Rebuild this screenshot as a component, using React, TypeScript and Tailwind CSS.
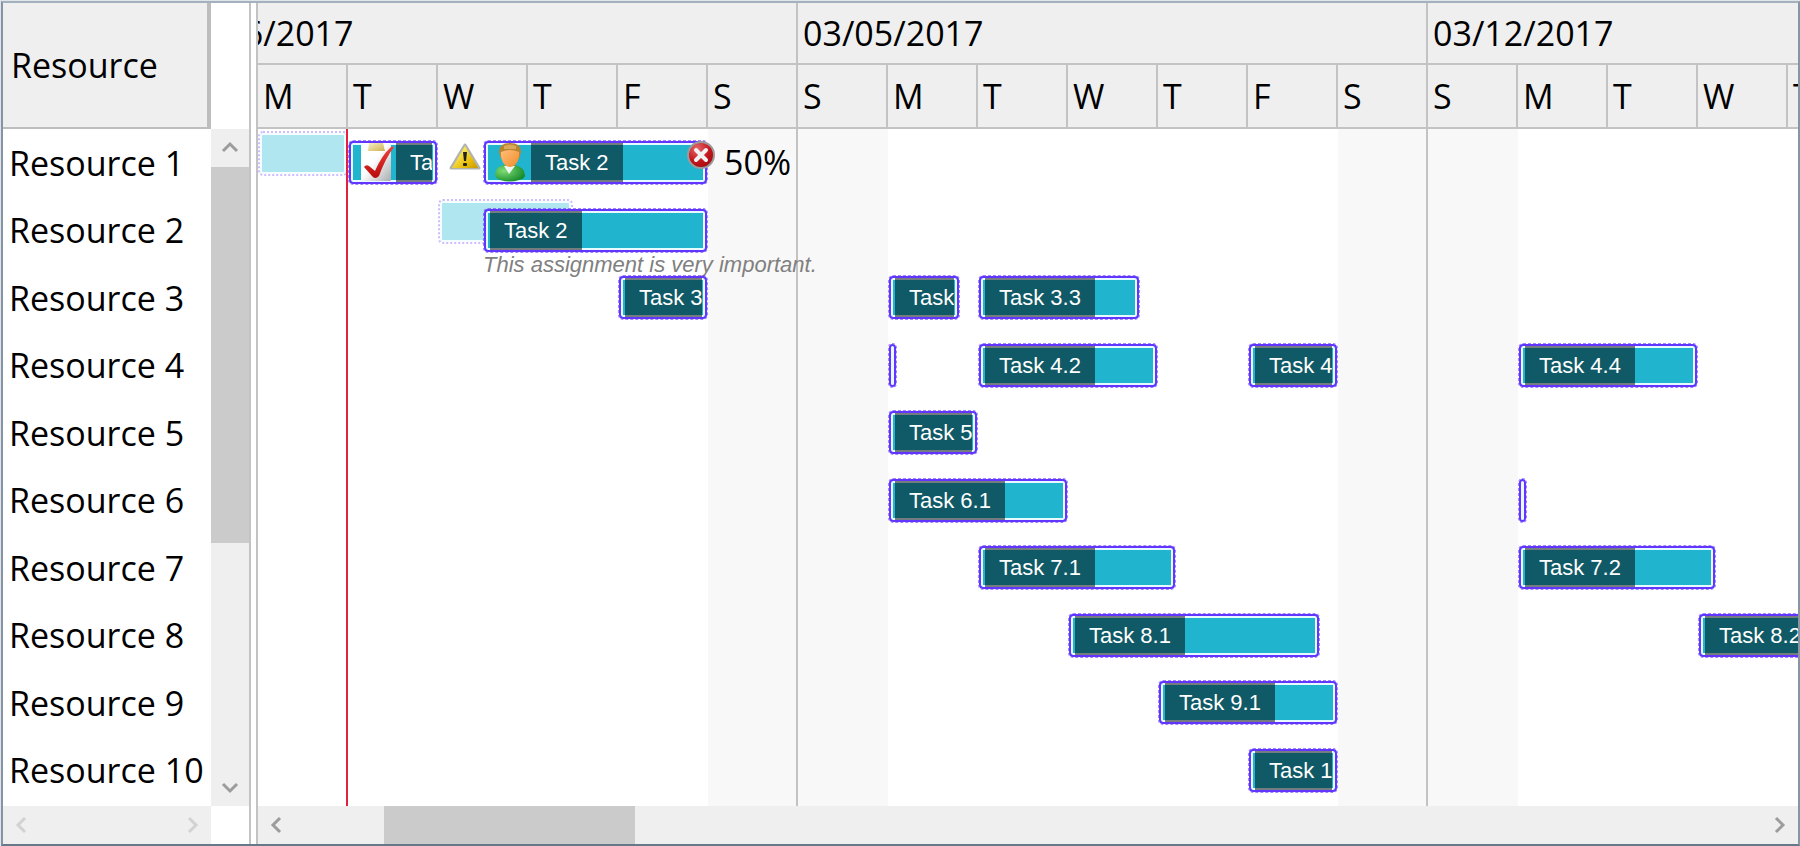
import type { ReactNode } from "react";
import clsx from "clsx";

const DAY_WIDTH = 90;
const DAYS = ["S", "M", "T", "W", "T", "F", "S"];
const WEEKS = ["02/26/2017", "03/05/2017", "03/12/2017"];
const TODAY = 2;

// start and days are counted from the first day of the first week
interface Task {
  name: string;
  start: number;
  days: number;
  icon?: ReactNode;
  error?: boolean;
  warning?: boolean;
  after?: string;
  note?: string;
}

interface Resource {
  name: string;
  baseline?: { start: number; days: number };
  tasks: Task[];
}

function CheckIcon() {
  return (
    <svg viewBox="0 0 41 41" className="size-[41px] shrink-0" aria-hidden="true">
      <defs>
        <linearGradient id="paper" x1="0" y1="0" x2="1" y2="1">
          <stop offset="0.45" stopColor="#ffffff" />
          <stop offset="1" stopColor="#a9adae" />
        </linearGradient>
        <linearGradient id="clip" x1="0" y1="0" x2="1" y2="1">
          <stop offset="0" stopColor="#f6efc4" />
          <stop offset="1" stopColor="#cdb052" />
        </linearGradient>
        <linearGradient id="tick" x1="0" y1="0" x2="0" y2="1">
          <stop offset="0" stopColor="#f0413c" />
          <stop offset="1" stopColor="#b80a0c" />
        </linearGradient>
      </defs>
      <path d="M7 0h28q1 0 1 1v36q0 1-1 1H7q-1 0-1-1V1q0-1 1-1z" fill="url(#paper)" />
      <path d="M14 0h14l2 8H13z" fill="url(#clip)" />
      <path d="M9 24q2-3 5-1l6 5Q27 12 36 4q2-1 3 0Q30 16 24 33q-4 4-7 0z" fill="url(#tick)" />
    </svg>
  );
}

function PersonIcon() {
  return (
    <svg viewBox="0 0 41 41" className="size-[41px] shrink-0" aria-hidden="true">
      <defs>
        <radialGradient id="shirt" cx="0.3" cy="0.35" r="0.75">
          <stop offset="0" stopColor="#7fdc74" />
          <stop offset="1" stopColor="#148a2a" />
        </radialGradient>
        <linearGradient id="face" x1="0" y1="0" x2="1" y2="1">
          <stop offset="0" stopColor="#ffc077" />
          <stop offset="1" stopColor="#f08a2c" />
        </linearGradient>
      </defs>
      <path d="M5 31q1-8 9-9h11q9 2 10 10 0 4-6 5-9 3-19 0-5-2-5-6z" fill="url(#shirt)" />
      <path d="M14 23l5 8 6-8z" fill="#eef6f4" />
      <path d="M9 9q0-9 11-9t11 9l-2 7H11z" fill="#b9832f" />
      <path d="M14 3q6-3 12 0v3H14z" fill="#d8a95a" />
      <path d="M11 9q9-4 18 0 1 8-4 13-5 4-10 0-5-5-4-13z" fill="url(#face)" />
    </svg>
  );
}

function WarningIcon() {
  return (
    <svg viewBox="0 0 34 32" className="h-8 w-[34px]" role="img" aria-label="Warning">
      <defs>
        <linearGradient id="warn" x1="0" y1="0" x2="1" y2="1">
          <stop offset="0.2" stopColor="#fff06a" />
          <stop offset="0.7" stopColor="#e8bc08" />
          <stop offset="1" stopColor="#c79800" />
        </linearGradient>
      </defs>
      <path d="M16 5L30 28H2z" fill="url(#warn)" stroke="#b3b3ad" strokeWidth="3" strokeLinejoin="round" />
      <path d="M16 6L29 28H3z" fill="url(#warn)" />
      <path d="M14 12h4l-1 9h-2z" fill="#222" />
      <rect x="14" y="23" width="4" height="3" rx="1" fill="#222" />
    </svg>
  );
}

function ErrorIcon() {
  return (
    <svg viewBox="0 0 30 30" className="size-[30px]" role="img" aria-label="Error">
      <defs>
        <radialGradient id="err" cx="0.35" cy="0.25" r="0.8">
          <stop offset="0" stopColor="#e2696c" />
          <stop offset="0.6" stopColor="#c4161c" />
          <stop offset="1" stopColor="#a00d10" />
        </radialGradient>
      </defs>
      <circle cx="15" cy="15" r="13" fill="url(#err)" stroke="#9b9b9b" strokeWidth="2" />
      <path d="M10 10l10 10M20 10L10 20" stroke="#f2f2f2" strokeWidth="4" strokeLinecap="round" />
    </svg>
  );
}

const RESOURCES: Resource[] = [
  {
    name: "Resource 1",
    baseline: { start: 1, days: 1 },
    tasks: [
      { name: "Task 1", start: 2, days: 1, icon: <CheckIcon /> },
      { name: "Task 2", start: 3.5, days: 2.5, icon: <PersonIcon />, warning: true, error: true, after: "50%" },
    ],
  },
  {
    name: "Resource 2",
    baseline: { start: 3, days: 1.5 },
    tasks: [{ name: "Task 2", start: 3.5, days: 2.5, note: "This assignment is very important." }],
  },
  {
    name: "Resource 3",
    tasks: [
      { name: "Task 3.1", start: 5, days: 1 },
      { name: "Task 3.2", start: 8, days: 0.8 },
      { name: "Task 3.3", start: 9, days: 1.8 },
    ],
  },
  {
    name: "Resource 4",
    tasks: [
      { name: "Task 4.1", start: 8, days: 0.1 },
      { name: "Task 4.2", start: 9, days: 2 },
      { name: "Task 4.3", start: 12, days: 1 },
      { name: "Task 4.4", start: 15, days: 2 },
    ],
  },
  { name: "Resource 5", tasks: [{ name: "Task 5.1", start: 8, days: 1 }] },
  {
    name: "Resource 6",
    tasks: [
      { name: "Task 6.1", start: 8, days: 2 },
      { name: "Task 6.2", start: 15, days: 0.1 },
    ],
  },
  {
    name: "Resource 7",
    tasks: [
      { name: "Task 7.1", start: 9, days: 2.2 },
      { name: "Task 7.2", start: 15, days: 2.2 },
    ],
  },
  {
    name: "Resource 8",
    tasks: [
      { name: "Task 8.1", start: 10, days: 2.8 },
      { name: "Task 8.2", start: 17, days: 2.8 },
    ],
  },
  { name: "Resource 9", tasks: [{ name: "Task 9.1", start: 11, days: 2 }] },
  { name: "Resource 10", tasks: [{ name: "Task 10.1", start: 12, days: 1 }] },
];

const ARROWS = {
  up: "M3 13l7-7 7 7",
  down: "M3 7l7 7 7-7",
  left: "M13 3l-7 7 7 7",
  right: "M7 3l7 7-7 7",
};

function ScrollButton({ dir, disabled }: { dir: keyof typeof ARROWS; disabled?: boolean }) {
  return (
    <button
      type="button"
      aria-label={`Scroll ${dir}`}
      disabled={disabled}
      className="flex size-[38px] shrink-0 items-center justify-center text-[#9c9c9c] disabled:text-[#d2d2d2]"
    >
      <svg viewBox="0 0 20 20" className="size-5" fill="none" stroke="currentColor" strokeWidth="3">
        <path d={ARROWS[dir]} />
      </svg>
    </button>
  );
}

function TaskBar({ task }: { task: Task }) {
  // too short for a fill or a label, only the outline is drawn
  const tiny = task.days < 0.2;

  return (
    <div
      className="absolute top-[11px] h-[45px]"
      style={{ left: task.start * DAY_WIDTH, width: task.days * DAY_WIDTH }}
    >
      <div className="h-full rounded-[5px] border border-dashed border-[#6236ff]/60">
        <div
          className={clsx(
            "h-full rounded-[4px] border-2 border-[#6236ff]",
            tiny ? "bg-[#e6fbff]" : "bg-[#20b4cf] pr-[3px] pl-1 shadow-[inset_0_0_0_2px_#e6fbff]"
          )}
        >
          {!tiny && (
            <div className="flex h-full overflow-hidden">
              {task.icon}
              <span className="flex shrink-0 items-center bg-black/50 px-3.5 text-[22px] whitespace-nowrap text-white">
                {task.name}
              </span>
            </div>
          )}
        </div>
      </div>
      {task.warning && (
        <div className="absolute top-0 right-full">
          <WarningIcon />
        </div>
      )}
      {task.error && (
        <div className="absolute top-0 -right-2">
          <ErrorIcon />
        </div>
      )}
      {task.after && (
        <div className="absolute inset-y-0 left-full flex items-center pl-4 font-['Open_Sans',sans-serif] text-[34px] text-black">
          {task.after}
        </div>
      )}
      {task.note && (
        <div className="absolute top-full left-0 text-[22px] leading-6 whitespace-nowrap text-[#808080] italic">
          {task.note}
        </div>
      )}
    </div>
  );
}

function ResourceTable() {
  return (
    <table className="h-[801px] w-full table-fixed border-separate border-spacing-0 font-['Open_Sans',sans-serif] text-[34px] leading-10 text-black">
      <thead>
        <tr className="h-[126px]">
          <th className="border-r-4 border-b-2 border-[#bdbdbd] bg-[#efefef] p-0 pl-2 text-left font-normal">Resource</th>
        </tr>
      </thead>
      <tbody>
        {RESOURCES.map((r) => (
          <tr key={r.name}>
            <td className="p-0 pl-1.5 whitespace-nowrap">{r.name}</td>
          </tr>
        ))}
      </tbody>
    </table>
  );
}

function Timeline() {
  return (
    <div className="-ml-[90px] w-[1890px]">
      {/* Week and day headers */}
      <div className="flex bg-[#efefef] font-['Open_Sans',sans-serif] text-black">
        {WEEKS.map((week) => (
          <div key={week} className="w-[630px] shrink-0">
            <div className="flex h-[62px] items-center border-r-2 border-b-2 border-[#c3c3c3] pl-[5px] text-[34px]">{week}</div>
            <div className="flex h-16">
              {DAYS.map((day, i) => (
                <div key={i} className="flex w-[90px] items-center border-r-2 border-b-2 border-[#c3c3c3] pl-[5px] text-[34px]">
                  {day}
                </div>
              ))}
            </div>
          </div>
        ))}
      </div>

      {/* Rows over the weekend shading */}
      <div className="relative pb-0.5">
        <div className="absolute inset-0 flex">
          {WEEKS.map((week) => (
            <div key={week} className="flex w-[630px] shrink-0 justify-between border-r-2 border-[#c3c3c3]">
              <div className="w-[90px] bg-[#f8f8f8]" />
              <div className="w-[88px] bg-[#f8f8f8]" />
            </div>
          ))}
        </div>
        <div className="grid h-[675px] auto-rows-fr">
          {RESOURCES.map((r) => (
            <div key={r.name} className="relative">
              {r.baseline && (
                <div
                  className="absolute top-0.5 h-[45px] rounded-[5px] border-2 border-dotted border-[#cdbcff] bg-[#b0e6ef] bg-clip-padding shadow-[inset_0_0_0_2px_#f5feff]"
                  style={{ left: r.baseline.start * DAY_WIDTH, width: r.baseline.days * DAY_WIDTH }}
                />
              )}
              {r.tasks.map((task) => (
                <TaskBar key={task.name} task={task} />
              ))}
            </div>
          ))}
        </div>
        <div className="absolute inset-y-0 w-0.5 bg-[#e3203f]" style={{ left: TODAY * DAY_WIDTH - 2 }} />
      </div>
    </div>
  );
}

export default function App() {
  return (
    <div className="bg-[#dfe4e9] pt-px pl-px font-['Liberation_Sans',Arial,sans-serif]">
      <div className="flex border-2 border-t-[#a3b0bd] border-r-[#8795a5] border-b-[#66788a] border-l-[#8494a4] bg-white">
        <div className="w-[246px] shrink-0">
          <div className="flex">
            <div className="w-[208px] shrink-0 pb-0.5">
              <ResourceTable />
            </div>
            <div className="flex flex-1 flex-col pt-[126px]">
              <div className="flex flex-1 flex-col bg-[#efefef]">
                <ScrollButton dir="up" />
                <div className="h-[376px] bg-[#cbcbcb]" />
                <div className="flex-1" />
                <ScrollButton dir="down" />
              </div>
            </div>
          </div>
          <div className="flex w-[208px] justify-between bg-[#efefef]">
            <ScrollButton dir="left" disabled />
            <ScrollButton dir="right" disabled />
          </div>
        </div>

        {/* Splitter */}
        <div className="w-[9px] shrink-0 border-x-2 border-[#c3c3c3] bg-white" />

        <div className="flex min-w-0 flex-1 flex-col">
          <div className="overflow-hidden">
            <Timeline />
          </div>
          <div className="flex bg-[#efefef]">
            <ScrollButton dir="left" />
            <div className="flex flex-1 pl-[88px]">
              <div className="w-[251px] bg-[#cbcbcb]" />
            </div>
            <ScrollButton dir="right" />
          </div>
        </div>
      </div>
    </div>
  );
}
